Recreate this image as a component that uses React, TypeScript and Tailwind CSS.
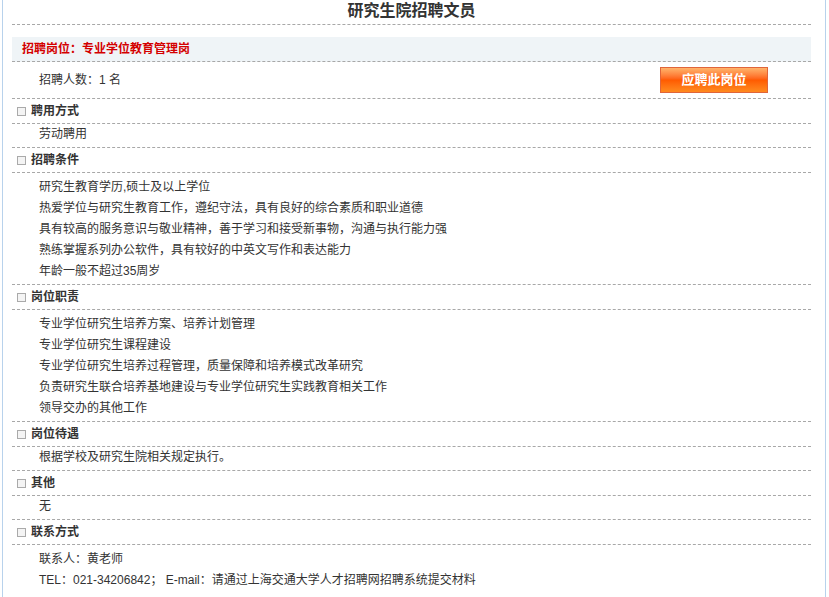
import React from "react";

const font = { fontFamily: '"Liberation Sans","Noto Sans CJK SC",sans-serif' };

function Head({ t }: { t: string }) {
  return (
    <div className="h-[25px] flex items-center border-b border-dashed border-[#a8a8a8] font-bold text-[#333]">
      <span className="w-[9px] h-[9px] border border-[#aaa] mx-[5px] inline-block bg-[#f4f4f4]"></span>
      {t}
    </div>
  );
}

function Body({ items, top = 0 }: { items: string[]; top?: number }) {
  return (
    <div className="border-b border-dashed border-[#a8a8a8] pl-[27px] pb-[2px]" style={{ paddingTop: top }}>
      {items.map((s, i) => (
        <div key={i} className="h-[21px] leading-[21px]">{s}</div>
      ))}
    </div>
  );
}

export default function App() {
  return (
    <div className="w-[829px] h-[597px] bg-white overflow-hidden text-[12px] text-[#333]" style={font}>
      <div className="ml-[2px] w-[824px] h-full border-l border-r border-[#b8d2ec] pl-[9px] pr-[14px]">
        <div className="h-[25px] border-b border-dashed border-[#a8a8a8] text-center text-[16px] font-bold leading-[22px]">研究生院招聘文员</div>
        <div className="mt-[12px] h-[25px] bg-[#eff4f7] border-b border-dashed border-[#a8a8a8] text-[#d40000] font-bold flex items-center pl-[10px]">
          招聘岗位：专业学位教育管理岗
        </div>
        <div className="h-[37px] border-b border-dashed border-[#a8a8a8] flex items-center pl-[27px]">
          <span className="flex-1">招聘人数：1 名</span>
          <span className="mr-[43px] w-[108px] h-[26px] flex items-center justify-center text-white font-bold text-[13px] border border-[#e0653a] bg-gradient-to-b from-[#ffb36a] via-[#ff5a00] to-[#ff8a1e]">应聘此岗位</span>
        </div>
        <Head t="聘用方式" />
        <Body items={["劳动聘用"]} />
        <Head t="招聘条件" />
        <Body top={4} items={["研究生教育学历,硕士及以上学位","热爱学位与研究生教育工作，遵纪守法，具有良好的综合素质和职业道德","具有较高的服务意识与敬业精神，善于学习和接受新事物，沟通与执行能力强","熟练掌握系列办公软件，具有较好的中英文写作和表达能力","年龄一般不超过35周岁"]} />
        <Head t="岗位职责" />
        <Body top={4} items={["专业学位研究生培养方案、培养计划管理","专业学位研究生课程建设","专业学位研究生培养过程管理，质量保障和培养模式改革研究","负责研究生联合培养基地建设与专业学位研究生实践教育相关工作","领导交办的其他工作"]} />
        <Head t="岗位待遇" />
        <Body items={["根据学校及研究生院相关规定执行。"]} />
        <Head t="其他" />
        <Body items={["无"]} />
        <Head t="联系方式" />
        <div className="pl-[27px] pt-[4px]">
          <div className="h-[21px] leading-[21px]">联系人：黄老师</div>
          <div className="h-[21px] leading-[21px]">TEL：021-34206842； E-mail：请通过上海交通大学人才招聘网招聘系统提交材料</div>
        </div>
      </div>
    </div>
  );
}
